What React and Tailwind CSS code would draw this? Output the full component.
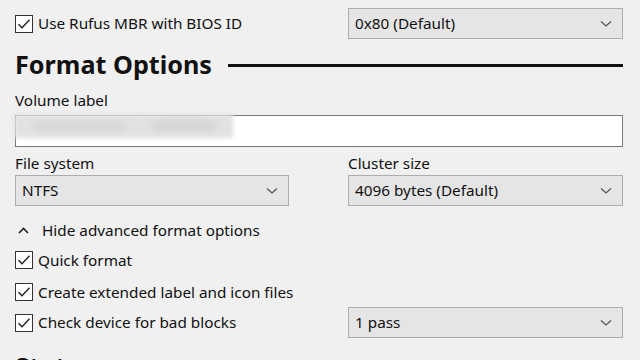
const font = { fontFamily: '"Noto Sans", "Open Sans", sans-serif' };

function CheckBox() {
  return (
    <svg width="18" height="18" viewBox="0 0 18 18" className="shrink-0">
      <rect x="0.5" y="0.5" width="17" height="17" fill="#fff" stroke="#333" strokeWidth="1" />
      <path d="M3.5 9.2 L7 12.8 L14.5 4.8" fill="none" stroke="#222" strokeWidth="1.4" />
    </svg>
  );
}

function Chevron() {
  return (
    <svg width="12" height="8" viewBox="0 0 12 8">
      <path d="M1 1.5 L6 6 L11 1.5" fill="none" stroke="#555" strokeWidth="1.3" />
    </svg>
  );
}

function Select({ value }) {
  return (
    <div className="flex h-[31px] items-center justify-between border border-[#adadad] bg-[#e5e5e5] pl-[6px] pr-[10px] text-[15.3px] text-[#111]">
      <span>{value}</span>
      <Chevron />
    </div>
  );
}

function Check({ label }) {
  return (
    <div className="flex items-center gap-[5px] text-[15.3px] text-[#111]">
      <CheckBox />
      <span>{label}</span>
    </div>
  );
}

export default function App() {
  return (
    <div className="h-[360px] w-[640px] overflow-hidden bg-[#f0f0f0]" style={font}>
      <div className="w-[623px] pl-[15px]">
        <div className="grid grid-cols-[274px_275px] gap-x-[59px] pt-[8px]">
          <div className="flex h-[31px] items-center">
            <Check label="Use Rufus MBR with BIOS ID" />
          </div>
          <Select value="0x80 (Default)" />
        </div>

        <div className="mt-[10px] flex h-[32px] items-center gap-[16px]">
          <h2 className="text-[25.2px] font-bold leading-none text-[#111]">Format Options</h2>
          <div className="h-[3px] flex-1 bg-[#111]" />
        </div>

        <div className="mt-[8px] text-[15.3px] leading-[22px] text-[#111]">Volume label</div>
        <div className="relative mt-[4px] h-[32px] border border-[#7a7a7a] bg-white">
          <div className="absolute left-[-2px] top-[-2px] h-[24px] w-[219px] bg-[#e2e2e2] blur-[2px]">
            <div className="absolute left-[20px] top-[9px] h-[7px] w-[90px] bg-[#d2d2d2] blur-[3px]" />
            <div className="absolute left-[140px] top-[8px] h-[8px] w-[60px] bg-[#d0d0d0] blur-[3px]" />
          </div>
        </div>

        <div className="mt-[5px] grid grid-cols-[274px_275px] gap-x-[59px]">
          <div>
            <div className="text-[15.3px] leading-[22px] text-[#111]">File system</div>
            <div className="mt-[1px]">
              <Select value="NTFS" />
            </div>
          </div>
          <div>
            <div className="text-[15.3px] leading-[22px] text-[#111]">Cluster size</div>
            <div className="mt-[1px]">
              <Select value="4096 bytes (Default)" />
            </div>
          </div>
        </div>

        <div className="mt-[12px] flex h-[24px] items-center gap-[13px] pl-[3px] text-[15.3px] text-[#111]">
          <svg width="11" height="7" viewBox="0 0 11 7">
            <path d="M1 6 L5.5 1.5 L10 6" fill="none" stroke="#222" strokeWidth="1.6" />
          </svg>
          <span>Hide advanced format options</span>
        </div>

        <div className="mt-[5px] flex h-[26px] items-center">
          <Check label="Quick format" />
        </div>
        <div className="mt-[6px] flex h-[26px] items-center">
          <Check label="Create extended label and icon files" />
        </div>
        <div className="mt-[2px] grid grid-cols-[274px_275px] gap-x-[59px]">
          <div className="flex h-[31px] items-center">
            <Check label="Check device for bad blocks" />
          </div>
          <Select value="1 pass" />
        </div>

        <h2 className="mt-[16px] text-[25.2px] font-bold leading-none text-[#111]">Status</h2>
      </div>
    </div>
  );
}
